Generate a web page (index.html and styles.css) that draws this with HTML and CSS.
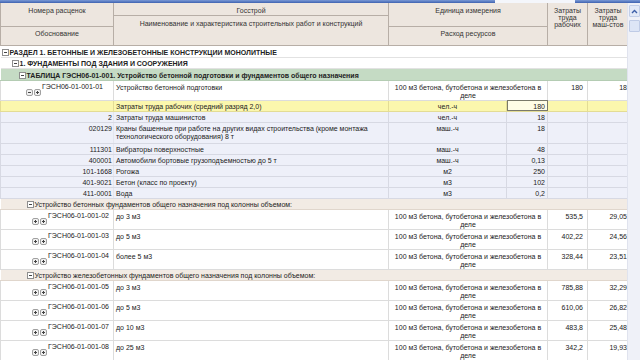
FILE: index.html
```html
<!DOCTYPE html>
<html lang="ru">
<head>
  <meta charset="utf-8">
  <link rel="stylesheet" href="styles.css">
</head>
<body>
  <div class="topbar"><div class="field"></div></div>
  <div class="main">
    <div class="grid">
      <table>
        <colgroup>
          <col class="w-code"><col class="w-name"><col class="w-unit"><col class="w-qty"><col class="w-num"><col class="w-num2">
        </colgroup>
        <thead>
          <tr class="h-a">
            <th rowspan="2">Номера расценок</th>
            <th>Госстрой</th>
            <th rowspan="2" colspan="2">Единица измерения</th>
            <th rowspan="3">Затраты<br>труда<br>рабочих</th>
            <th rowspan="3">Затраты<br>труда<br>маш-стов</th>
          </tr>
          <tr class="h-b">
            <th rowspan="2">Наименование и характеристика строительных работ и конструкций</th>
          </tr>
          <tr class="h-c">
            <th>Обоснование</th>
            <th colspan="2">Расход ресурсов</th>
          </tr>
        </thead>
        <tbody>
          <tr class="sec">
            <td colspan="6" class="lvl0"><span class="tg"></span>РАЗДЕЛ 1. БЕТОННЫЕ И ЖЕЛЕЗОБЕТОННЫЕ КОНСТРУКЦИИ МОНОЛИТНЫЕ</td>
          </tr>
          <tr class="sec">
            <td colspan="6" class="lvl1"><span class="tg"></span>1. ФУНДАМЕНТЫ ПОД ЗДАНИЯ И СООРУЖЕНИЯ</td>
          </tr>
          <tr class="sec tbl">
            <td colspan="6" class="lvl2"><span class="tg"></span>ТАБЛИЦА ГЭСН06-01-001. Устройство бетонной подготовки и фундаментов общего назначения</td>
          </tr>
          <tr class="work">
            <td class="code first"><span class="tg round"></span><span class="tg round plus"></span><span class="num">ГЭСН06-01-001-01</span></td>
            <td>Устройство бетонной подготовки</td>
            <td colspan="2" class="c">100 м3 бетона, бутобетона и железобетона в деле</td>
            <td class="val">180</td>
            <td class="val last">18</td>
          </tr>
          <tr class="res cur">
            <td class="rcode"></td>
            <td>Затраты труда рабочих (средний разряд 2,0)</td>
            <td class="c">чел.-ч</td>
            <td class="val sel">180</td>
            <td></td><td></td>
          </tr>
          <tr class="res">
            <td class="rcode">2</td>
            <td>Затраты труда машинистов</td>
            <td class="c">чел.-ч</td>
            <td class="val">18</td>
            <td></td><td></td>
          </tr>
          <tr class="res two">
            <td class="rcode">020129</td>
            <td>Краны башенные при работе на других видах строительства (кроме монтажа технологического оборудования) 8 т</td>
            <td class="c">маш.-ч</td>
            <td class="val">18</td>
            <td></td><td></td>
          </tr>
          <tr class="res">
            <td class="rcode">111301</td>
            <td>Вибраторы поверхностные</td>
            <td class="c">маш.-ч</td>
            <td class="val">48</td>
            <td></td><td></td>
          </tr>
          <tr class="res">
            <td class="rcode">400001</td>
            <td>Автомобили бортовые грузоподъемностью до 5 т</td>
            <td class="c">маш.-ч</td>
            <td class="val">0,13</td>
            <td></td><td></td>
          </tr>
          <tr class="res">
            <td class="rcode">101-1668</td>
            <td>Рогожа</td>
            <td class="c">м2</td>
            <td class="val">250</td>
            <td></td><td></td>
          </tr>
          <tr class="res">
            <td class="rcode">401-9021</td>
            <td>Бетон (класс по проекту)</td>
            <td class="c">м3</td>
            <td class="val">102</td>
            <td></td><td></td>
          </tr>
          <tr class="res">
            <td class="rcode">411-0001</td>
            <td>Вода</td>
            <td class="c">м3</td>
            <td class="val">0,2</td>
            <td></td><td></td>
          </tr>

          <tr class="grp">
            <td colspan="6"><span class="tg"></span>Устройство бетонных фундаментов общего назначения под колонны объемом:</td>
          </tr>
          <tr class="work short">
            <td class="code"><span class="tg round plus"></span><span class="tg round plus"></span><span class="num">ГЭСН06-01-001-02</span></td>
            <td>до 3 м3</td>
            <td colspan="2" class="c">100 м3 бетона, бутобетона и железобетона в деле</td>
            <td class="val">535,5</td>
            <td class="val last">29,05</td>
          </tr>
          <tr class="work">
            <td class="code"><span class="tg round plus"></span><span class="tg round plus"></span><span class="num">ГЭСН06-01-001-03</span></td>
            <td>до 5 м3</td>
            <td colspan="2" class="c">100 м3 бетона, бутобетона и железобетона в деле</td>
            <td class="val">402,22</td>
            <td class="val last">24,56</td>
          </tr>
          <tr class="work">
            <td class="code"><span class="tg round plus"></span><span class="tg round plus"></span><span class="num">ГЭСН06-01-001-04</span></td>
            <td>более 5 м3</td>
            <td colspan="2" class="c">100 м3 бетона, бутобетона и железобетона в деле</td>
            <td class="val">328,44</td>
            <td class="val last">23,51</td>
          </tr>

          <tr class="grp">
            <td colspan="6"><span class="tg"></span>Устройство железобетонных фундаментов общего назначения под колонны объемом:</td>
          </tr>
          <tr class="work">
            <td class="code"><span class="tg round plus"></span><span class="tg round plus"></span><span class="num">ГЭСН06-01-001-05</span></td>
            <td>до 3 м3</td>
            <td colspan="2" class="c">100 м3 бетона, бутобетона и железобетона в деле</td>
            <td class="val">785,88</td>
            <td class="val last">32,29</td>
          </tr>
          <tr class="work short">
            <td class="code"><span class="tg round plus"></span><span class="tg round plus"></span><span class="num">ГЭСН06-01-001-06</span></td>
            <td>до 5 м3</td>
            <td colspan="2" class="c">100 м3 бетона, бутобетона и железобетона в деле</td>
            <td class="val">610,06</td>
            <td class="val last">26,82</td>
          </tr>
          <tr class="work short">
            <td class="code"><span class="tg round plus"></span><span class="tg round plus"></span><span class="num">ГЭСН06-01-001-07</span></td>
            <td>до 10 м3</td>
            <td colspan="2" class="c">100 м3 бетона, бутобетона и железобетона в деле</td>
            <td class="val">483,8</td>
            <td class="val last">25,48</td>
          </tr>
          <tr class="work short">
            <td class="code"><span class="tg round plus"></span><span class="tg round plus"></span><span class="num">ГЭСН06-01-001-08</span></td>
            <td>до 25 м3</td>
            <td colspan="2" class="c">100 м3 бетона, бутобетона и железобетона в деле</td>
            <td class="val">342,2</td>
            <td class="val last">19,93</td>
          </tr>
          <tr class="work">
            <td class="code"></td><td></td><td colspan="2"></td><td></td><td></td>
          </tr>
        </tbody>
      </table>
    </div>
    <div class="scrollbar">
      <div class="sb-btn">
        <svg width="7" height="5" viewBox="0 0 7 5"><path d="M1 4 L3.5 1.5 L6 4" fill="none" stroke="#3d5fa8" stroke-width="1.4"/></svg>
      </div>
      <div class="sb-thumb"></div>
    </div>
  </div>
</body>
</html>
```

FILE: styles.css
```css
body {
  margin: 0;
  font-family: "Liberation Sans", Arial, sans-serif;
  font-size: 7px;
  color: #222;
  background: #fff;
  overflow: hidden;
}
.topbar {
  height: 3px;
  background: linear-gradient(#7a9ad6, #3f62b0);
  display: flex;
}
.topbar .field {
  margin-left: 495px;
  width: 80px;
  background: #f4f6fb;
}
.main {
  display: flex;
  height: 357px;
}
.grid {
  width: 628px;
  overflow: hidden;
}
table {
  border-collapse: collapse;
  table-layout: fixed;
  width: 628px;
}
.w-code { width: 113px; }
.w-name { width: 275px; }
.w-unit { width: 118px; }
.w-qty { width: 41px; }
.w-num { width: 40px; }
.w-num2 { width: 41px; }

th {
  background: #ede6df;
  color: #333;
  font-weight: normal;
  line-height: 7px;
  text-align: center;
  vertical-align: top;
  padding: 4px 1px 0;
  border: 1px solid #b7aea6;
  border-top: none;
}
.h-a { height: 12px; }
.h-b { height: 11px; }
.h-c { height: 19px; }
.h-c th { padding-top: 3px; }

td {
  box-sizing: border-box;
  line-height: 8px;
  height: 11px;
  padding: 2px 2px 0;
  vertical-align: top;
  border: 1px solid #dcdcdc;
  border-top: none;
}
.c { text-align: center; }
.val { text-align: right; padding-right: 2px; }
.work .val { padding-right: 4px; padding-top: 3px; }
.work .val.last { padding-right: 1px; }

/* tree toggles */
.tg {
  display: inline-block;
  position: relative;
  width: 5px;
  height: 5px;
  border: 1px solid #8e8e8e;
  background: #fff;
  margin-right: 1px;
  vertical-align: -1px;
}
.tg::before {
  content: "";
  position: absolute;
  left: 1px;
  top: 2px;
  width: 3px;
  height: 1px;
  background: #444;
}
.tg.plus::after {
  content: "";
  position: absolute;
  left: 2px;
  top: 1px;
  width: 1px;
  height: 3px;
  background: #444;
}
.tg.round {
  border-radius: 2px;
  border-color: #a0a0a0;
  background: #f1f1f1;
}

.sec td {
  font-weight: bold;
  border-left: none;
  border-right: none;
  border-color: #e2e2e2;
}
.lvl0 { padding-left: 1px; padding-top: 3px; }
.lvl1 { padding-left: 11px; }
.sec td.lvl1 { height: 10px; }
.sec td.lvl2 { padding-left: 18px; height: 12px; padding-top: 3px; }
.tbl td {
  background: #c5dbc4;
  border-color: #b4ccb3;
}

.work td { height: 20px; padding-top: 3px; }
.work.short td { height: 19px; }
.code {
  white-space: nowrap;
}
td.code { padding-left: 31px; padding-top: 2px; }
td.code.first { padding-left: 25px; }
.code .tg { vertical-align: -7px; margin-right: 1px; }
.work td.c { padding-left: 1px; padding-right: 1px; }

.res td {
  background: #eef0f9;
  border-color: #d7d9e3;
}
.res.two td { height: 21px; }
.res .rcode {
  text-align: right;
  padding-right: 1px;
  border-right-color: #e4e6ef;
}
.res.cur td { background: #fbf7ad; border-color: #e3dc95; }
.res.cur td.sel {
  background: #fffde6;
  outline: 1px solid #7a7a6a;
  outline-offset: -1px;
}

.grp td {
  background: #f2ebe4;
  border-color: #e0d6cc;
  border-left: none;
  border-right: none;
  padding-left: 26px;
}

.scrollbar {
  width: 12px;
  background: #eff1f8;
  border-left: 1px solid #e0e3ee;
  display: flex;
  flex-direction: column;
  align-items: center;
  padding-top: 2px;
  gap: 3px;
}
.sb-btn {
  width: 9px;
  height: 10px;
  background: #e2e9f7;
  border: 1px solid #c3cfe8;
  border-radius: 1px;
  display: flex;
  align-items: center;
  justify-content: center;
}
.sb-thumb {
  width: 9px;
  height: 10px;
  background: #dde5f6;
  border: 1px solid #bfcbe6;
  border-radius: 1px;
}
```
